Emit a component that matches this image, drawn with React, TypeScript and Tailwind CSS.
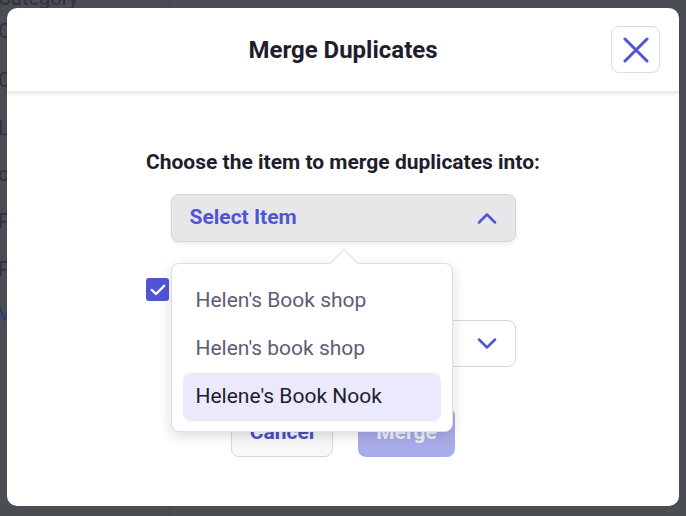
import React from "react";

const font = { fontFamily: "Roboto, 'Noto Sans', sans-serif" };

function XIcon() {
  return (
    <svg width="26" height="26" viewBox="0 0 26 26" fill="none">
      <path d="M2 2L24 24M24 2L2 24" stroke="#4f55d6" strokeWidth="3" strokeLinecap="round" />
    </svg>
  );
}

function ChevronUp() {
  return (
    <svg width="20" height="12" viewBox="0 0 20 12" fill="none">
      <path d="M2 10.5L10 2.5L18 10.5" stroke="#5056d2" strokeWidth="2.5" strokeLinecap="round" strokeLinejoin="round" />
    </svg>
  );
}

function ChevronDown() {
  return (
    <svg width="20" height="12" viewBox="0 0 20 12" fill="none">
      <path d="M2 1.5L10 9.5L18 1.5" stroke="#5056d2" strokeWidth="2.5" strokeLinecap="round" strokeLinejoin="round" />
    </svg>
  );
}

function Check() {
  return (
    <svg width="16" height="12" viewBox="0 0 16 12" fill="none">
      <path d="M1.8 6L6 10L14.2 1.8" stroke="white" strokeWidth="2.4" strokeLinecap="round" strokeLinejoin="round" />
    </svg>
  );
}

export default function App() {
  const bgItems = [
    { t: "Chair", h: 46, c: "text-[#303338]" },
    { t: "Couch", h: 52, c: "text-[#303338]" },
    { t: "Lamp", h: 44, c: "text-[#303338]" },
    { t: "oak", h: 48, c: "text-[#303338]" },
    { t: "Pen", h: 46, c: "text-[#303338]" },
    { t: "Pad", h: 50, c: "text-[#303338]" },
    { t: "View", h: 40, c: "text-[#2c3a78]" },
  ];
  return (
    <div className="relative w-[686px] h-[516px] overflow-hidden bg-[#4a4e53]" style={font}>
      {/* background page (dimmed) */}
      <div className="flex h-full">
        <div className="w-[172px] border-r border-[#3f4347] flex flex-col ml-[-2px]">
          <div className="h-[8px] overflow-hidden">
            <div className="text-[20px] leading-[20px] text-[#303338] mt-[-12px]">Category</div>
          </div>
          {bgItems.map((it, i) => (
            <div key={i} className={`flex items-center text-[20px] ${it.c}`} style={{ height: it.h }}>
              {it.t}
            </div>
          ))}
        </div>
        <div className="flex-1" />
      </div>

      {/* modal */}
      <div className="absolute left-[7px] top-[8px] w-[672px] h-[498px] rounded-[10px] bg-white flex flex-col">
        <div className="relative h-[84px] shrink-0 flex items-center justify-center rounded-t-[10px] shadow-[0_2px_3px_rgba(0,0,0,0.09)] border-b border-[#ececef]">
          <div className="text-[24px] font-bold text-[#1e1e2d]">Merge Duplicates</div>
          <button className="absolute right-[19px] top-[18px] w-[49px] h-[47px] rounded-[8px] border border-[#dcdce4] bg-white flex items-center justify-center">
            <XIcon />
          </button>
        </div>

        <div className="flex flex-col items-center">
          <div className="mt-[56px] text-[21px] leading-[28px] font-bold text-[#1e1e2d]">
            Choose the item to merge duplicates into:
          </div>

          <div className="relative mt-[18px] w-[345px] h-[48px] z-10">
            <div className="w-full h-full rounded-[8px] bg-[#e7e7ea] border border-[#d6d6dd] shadow-[0_2px_4px_rgba(0,0,0,0.08)] flex items-center justify-between pl-[18px] pr-[18px]">
              <span className="text-[21px] font-bold text-[#5056d2]">Select Item</span>
              <ChevronUp />
            </div>

            {/* dropdown */}
            <div className="absolute left-0 top-[69px] w-[282px] h-[169px] rounded-[8px] bg-white border border-[#dedee4] shadow-[0_4px_14px_rgba(0,0,0,0.14)] px-[11px] pt-[13px]">
              <div className="absolute left-[162px] top-[-11px] w-[20px] h-[20px] rotate-45 bg-white border-l border-t border-[#dedee4]" />
              <div className="relative flex flex-col">
                <div className="h-[48px] flex items-center pl-[13px] text-[21px] text-[#5e5d72]">Helen's Book shop</div>
                <div className="h-[48px] flex items-center pl-[13px] text-[21px] text-[#5e5d72]">Helen's book shop</div>
                <div className="h-[48px] flex items-center pl-[13px] text-[21px] text-[#1e1d2e] bg-[#ebe9fc] rounded-[8px]">Helene's Book Nook</div>
              </div>
            </div>
          </div>

          <div className="mt-[36px] w-[394px] h-[23px] flex items-center">
            <div className="w-[23px] h-[23px] rounded-[3px] bg-[#4f55d6] flex items-center justify-center">
              <Check />
            </div>
          </div>

          <div className="mt-[19px] w-[345px] h-[47px] rounded-[8px] bg-white border border-[#d6d6dd] flex items-center justify-end pr-[18px]">
            <ChevronDown />
          </div>

          <div className="mt-[41px] flex gap-[25px]">
            <button className="w-[102px] h-[49px] rounded-[8px] border border-[#d6d6dd] bg-[#f8f8f9] text-[21px] font-bold text-[#4c51c6]">
              Cancel
            </button>
            <button className="w-[97px] h-[49px] rounded-[8px] bg-[#a9acea] text-[21px] font-bold text-[#eef0fb]">
              Merge
            </button>
          </div>
        </div>
      </div>
    </div>
  );
}
